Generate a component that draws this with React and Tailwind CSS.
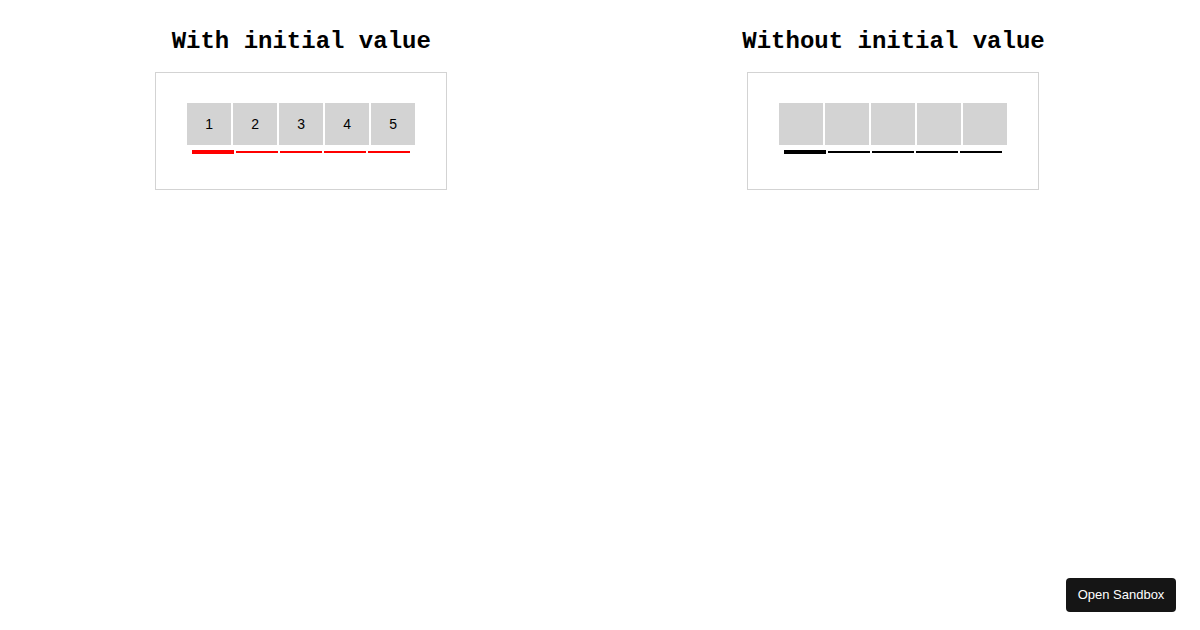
import React from 'react';

const digits = ['1', '2', '3', '4', '5'];

function CodeInput({ values, lineColor }) {
  return (
    <div className="border border-[#d3d3d3] p-[30px]">
      <div className="flex">
        {values.map((v, i) => (
          <div
            key={i}
            className="mx-[1px] flex h-[42px] w-[44px] items-center justify-center bg-[#d3d3d3] text-[14px] leading-none text-black"
          >
            {v}
          </div>
        ))}
      </div>
      <div className="mt-[5px] mb-[5px] flex h-[4px] items-center justify-center gap-[2px]">
        {values.map((_, i) => (
          <div
            key={i}
            className={`w-[42px] ${i === 0 ? 'h-[4px]' : 'h-[2px]'} ${lineColor}`}
          />
        ))}
      </div>
    </div>
  );
}

export default function App() {
  return (
    <div className="relative h-[630px] w-full bg-white font-['Liberation_Sans',Arial,sans-serif]">
      <div className="flex justify-center gap-[295px] pt-[28px]">
        <div className="flex flex-col items-center">
          <h2 className="mb-[16px] font-['Liberation_Mono','Courier_New',monospace] text-[24px] leading-[28px] font-bold text-black">
            With initial value
          </h2>
          <CodeInput values={digits} lineColor="bg-[#ff0000]" />
        </div>
        <div className="flex flex-col items-center">
          <h2 className="mb-[16px] font-['Liberation_Mono','Courier_New',monospace] text-[24px] leading-[28px] font-bold text-black">
            Without initial value
          </h2>
          <CodeInput values={['', '', '', '', '']} lineColor="bg-black" />
        </div>
      </div>

      <button className="fixed right-[24px] bottom-[18px] h-[34px] w-[110px] rounded-[4px] bg-[#151515] text-[13px] text-white">
        Open Sandbox
      </button>
    </div>
  );
}
